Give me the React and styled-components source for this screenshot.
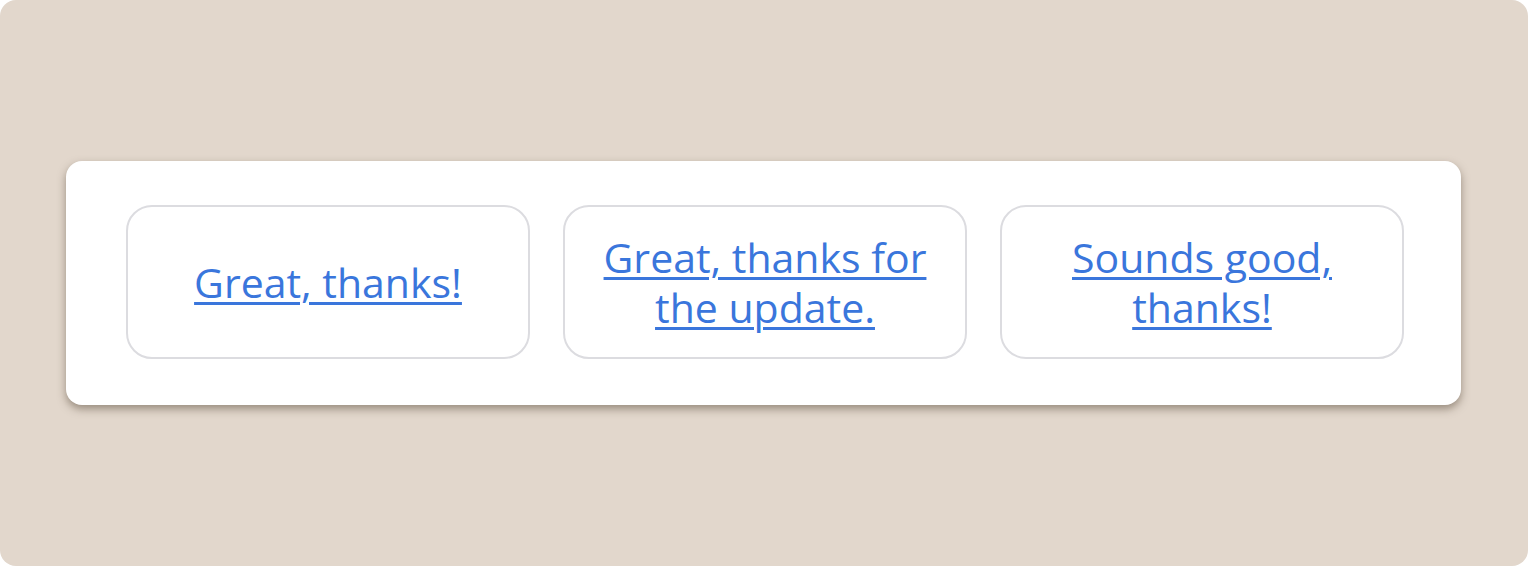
import React from "react";
import styled, { createGlobalStyle } from "styled-components";

const Global = createGlobalStyle`
  html, body { margin: 0; padding: 0; background: #ffffff; }
  #root { width: 1528px; height: 566px; }
`;

const Frame = styled.div`
  box-sizing: border-box;
  width: 1528px;
  height: 566px;
  background: #e2d7cc;
  border-radius: 16px;
  padding: 161px 67px 0 66px;
`;

const Card = styled.div`
  box-sizing: border-box;
  background: #ffffff;
  border-radius: 16px;
  box-shadow: 0 4px 8px rgba(80, 65, 50, 0.5);
  padding: 44px 58px 46px 60px;
  display: grid;
  grid-template-columns: repeat(3, 404px);
  column-gap: 33px;
  height: 244px;
`;

const Reply = styled.div`
  box-sizing: border-box;
  height: 154px;
  border: 2px solid #dcdce0;
  border-radius: 26px;
  display: flex;
  align-items: center;
  justify-content: center;
  padding: 0 20px;
  text-align: center;
`;

const Link = styled.a`
  font-family: "Open Sans", "Liberation Sans", sans-serif;
  font-size: 41px;
  font-weight: 500;
  line-height: 50px;
  color: #3a76dc;
  text-decoration: underline;
  text-decoration-thickness: 3px;
  text-underline-offset: 4px;
  cursor: pointer;
`;

const replies = ["Great, thanks!", "Great, thanks for the update.", "Sounds good, thanks!"];

export default function App() {
  return (
    <>
      <Global />
      <Frame>
        <Card>
          {replies.map((r) => (
            <Reply key={r}>
              <Link>{r}</Link>
            </Reply>
          ))}
        </Card>
      </Frame>
    </>
  );
}
